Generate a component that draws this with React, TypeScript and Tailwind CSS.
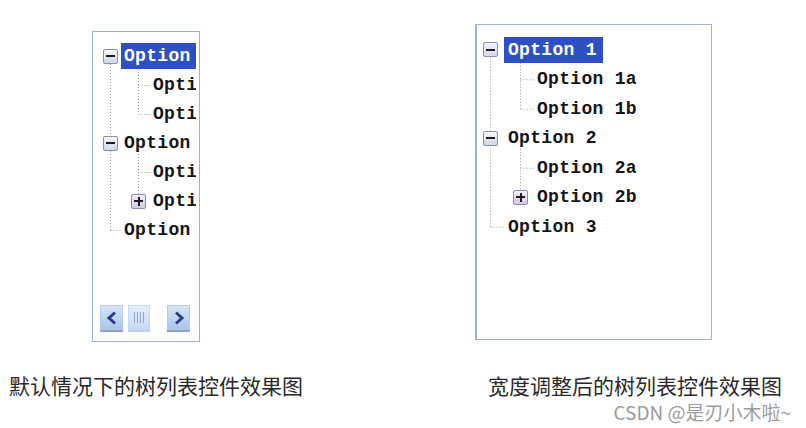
import React from "react";

type Row = { label: string; level: 0 | 1; box: "minus" | "plus" | null; selected?: boolean };

const rows: Row[] = [
  { label: "Option 1", level: 0, box: "minus", selected: true },
  { label: "Option 1a", level: 1, box: null },
  { label: "Option 1b", level: 1, box: null },
  { label: "Option 2", level: 0, box: "minus" },
  { label: "Option 2a", level: 1, box: null },
  { label: "Option 2b", level: 1, box: "plus" },
  { label: "Option 3", level: 0, box: null },
];

function ExpBox({ kind, bg }: { kind: "minus" | "plus"; bg: string }) {
  return (
    <span
      className={`relative flex items-center justify-center w-[15px] h-[15px] shrink-0 border border-[#8690b0] rounded-[2px] ${bg}`}
    >
      <span className="absolute w-[9px] h-[2px] bg-[#1c1c24]" />
      {kind === "plus" && <span className="absolute w-[2px] h-[9px] bg-[#1c1c24]" />}
    </span>
  );
}

type Geo = {
  rowH: number;
  padTop: number;
  rootX: number;
  childX: number;
  rootStubEnd: number;
  childStubEnd: number;
  rowClass: string;
  lead0: string;
  box0: string;
  lead1: string;
  box1: string;
  hl: string;
};

function Tree({ g }: { g: Geo }) {
  const cy = (i: number) => g.padTop + g.rowH * (i + 0.5);
  const dash = { stroke: "#9a9a9a", strokeWidth: 1, strokeDasharray: "1 2", fill: "none" } as const;
  return (
    <div className="relative w-full h-full overflow-hidden">
      <svg className="absolute inset-0 w-full h-full pointer-events-none" xmlns="http://www.w3.org/2000/svg">
        <line x1={g.rootX + 0.5} y1={cy(0) + 8} x2={g.rootX + 0.5} y2={cy(6)} {...dash} />
        <line x1={g.rootX + 0.5} y1={cy(6) + 0.5} x2={g.rootStubEnd} y2={cy(6) + 0.5} {...dash} />
        <line x1={g.childX + 0.5} y1={cy(0) + 13} x2={g.childX + 0.5} y2={cy(2)} {...dash} />
        <line x1={g.childX + 0.5} y1={cy(1) + 0.5} x2={g.childStubEnd} y2={cy(1) + 0.5} {...dash} />
        <line x1={g.childX + 0.5} y1={cy(2) + 0.5} x2={g.childStubEnd} y2={cy(2) + 0.5} {...dash} />
        <line x1={g.childX + 0.5} y1={cy(3) + 8} x2={g.childX + 0.5} y2={cy(5) - 7} {...dash} />
        <line x1={g.childX + 0.5} y1={cy(4) + 0.5} x2={g.childStubEnd} y2={cy(4) + 0.5} {...dash} />
      </svg>
      <div className="relative flex flex-col" style={{ paddingTop: g.padTop }}>
        {rows.map((r) => (
          <div key={r.label} className={`flex items-center whitespace-nowrap ${g.rowClass}`}>
            <div className={`flex items-center shrink-0 ${r.level === 0 ? g.lead0 : g.lead1}`}>
              {r.box && (
                <span className={r.level === 0 ? g.box0 : g.box1}>
                  <ExpBox
                    kind={r.box}
                    bg={
                      r.box === "plus"
                        ? "bg-gradient-to-b from-[#f4eef8] to-[#d4c6e4]"
                        : "bg-gradient-to-b from-[#f6f7fb] to-[#d3d7e6]"
                    }
                  />
                </span>
              )}
            </div>
            <span
              className={`h-[26px] leading-[26px] text-[18px] font-bold tracking-[0.3px] ${g.hl} ${
                r.selected ? "bg-[#2f4fc4] text-white" : "text-[#161616]"
              }`}
              style={{ fontFamily: '"Liberation Mono", "DejaVu Sans Mono", monospace' }}
            >
              {r.label}
            </span>
          </div>
        ))}
      </div>
    </div>
  );
}

const leftGeo: Geo = {
  rowH: 29,
  padTop: 9.5,
  rootX: 17,
  childX: 45,
  rootStubEnd: 29,
  childStubEnd: 58,
  rowClass: "h-[29px]",
  lead0: "w-[28px]",
  box0: "ml-[10px] flex",
  lead1: "w-[57px]",
  box1: "ml-[38px] flex",
  hl: "pl-[3px] pr-[4px]",
};

const rightGeo: Geo = {
  rowH: 29.5,
  padTop: 10,
  rootX: 13,
  childX: 43,
  rootStubEnd: 27,
  childStubEnd: 57,
  rowClass: "h-[29.5px]",
  lead0: "w-[27px]",
  box0: "ml-[6px] flex",
  lead1: "w-[56px]",
  box1: "ml-[36px] flex",
  hl: "pl-[4px] pr-[6px]",
};

function ScrollBtn({ dir }: { dir: "left" | "right" }) {
  return (
    <div className="flex flex-col w-[23px] h-[27px]">
      <div className="flex items-center justify-center w-[23px] h-[25px] bg-gradient-to-b from-[#d6e5f7] to-[#a9c5ea] border border-[#b5cbe8]">
        <svg width="12" height="14" viewBox="0 0 12 14">
          {dir === "left" ? (
            <path d="M9 1.5 L3 7 L9 12.5" stroke="#283e8e" strokeWidth="3" fill="none" strokeLinejoin="miter" />
          ) : (
            <path d="M3 1.5 L9 7 L3 12.5" stroke="#283e8e" strokeWidth="3" fill="none" strokeLinejoin="miter" />
          )}
        </svg>
      </div>
      <div className="h-[2px] w-[23px] bg-[#8fa4c4]" />
    </div>
  );
}

export default function App() {
  return (
    <div
      className="w-[806px] h-[428px] bg-white overflow-hidden flex flex-col"
      style={{ fontFamily: '"Noto Sans CJK SC", "Noto Sans", sans-serif' }}
    >
      <div className="h-[375px] flex items-start shrink-0">
        {/* left panel */}
        <div className="pl-[92px] pt-[31px]">
          <div className="w-[108px] h-[311px] border border-[#9fb0cf] bg-white flex flex-col">
            <div className="flex-1 min-h-0 mr-[3px]">
              <Tree g={leftGeo} />
            </div>
            <div className="h-[27px] mb-[9px] flex items-start pl-[7px]">
              <ScrollBtn dir="left" />
              <div className="ml-[5px] w-[22px] h-[27px] flex flex-col">
                <div className="w-[22px] h-[25px] bg-gradient-to-b from-[#e4eefa] to-[#c8daf2] border border-[#c9d8ee] flex items-center justify-center gap-[2px]">
                  <span className="w-[1px] h-[11px] bg-[#8ea6c8]" />
                  <span className="w-[1px] h-[11px] bg-[#8ea6c8]" />
                  <span className="w-[1px] h-[11px] bg-[#8ea6c8]" />
                  <span className="w-[1px] h-[11px] bg-[#8ea6c8]" />
                </div>
                <div className="h-[2px] w-[22px] bg-[#c3d0e4]" />
              </div>
              <div className="ml-[17px]">
                <ScrollBtn dir="right" />
              </div>
            </div>
          </div>
        </div>
        {/* right panel */}
        <div className="ml-[275px] pt-[24px]">
          <div className="w-[237px] h-[316px] border border-[#a3b1cc] border-l-2 bg-white">
            <Tree g={rightGeo} />
          </div>
        </div>
      </div>
      <div className="h-[21px] flex items-center text-[21px] leading-[21px] text-[#2a2a2a] shrink-0">
        <span className="ml-[9px]">默认情况下的树列表控件效果图</span>
        <span className="ml-[185px]">宽度调整后的树列表控件效果图</span>
      </div>
      <div className="mt-[6px] flex justify-end pr-[15px]">
        <span className="text-[19px] leading-[19px] text-[#9b9b9b]">CSDN @是刃小木啦~</span>
      </div>
    </div>
  );
}
